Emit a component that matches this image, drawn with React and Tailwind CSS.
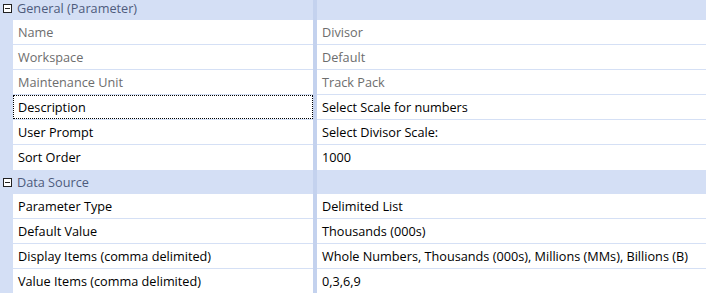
import React from "react"

const sections = [
    {
        title: "General (Parameter)",
        rows: [
            { label: "Name", value: "Divisor", readOnly: true },
            { label: "Workspace", value: "Default", readOnly: true },
            { label: "Maintenance Unit", value: "Track Pack", readOnly: true },
            { label: "Description", value: "Select Scale for numbers", focused: true },
            { label: "User Prompt", value: "Select Divisor Scale:" },
            { label: "Sort Order", value: "1000" },
        ],
    },
    {
        title: "Data Source",
        rows: [
            { label: "Parameter Type", value: "Delimited List" },
            { label: "Default Value", value: "Thousands (000s)" },
            { label: "Display Items (comma delimited)", value: "Whole Numbers, Thousands (000s), Millions (MMs), Billions (B)" },
            { label: "Value Items (comma delimited)", value: "0,3,6,9" },
        ],
    },
]

function Toggle() {
    return (
        <span className="w-[9px] h-[9px] border border-[#222] bg-white flex items-center justify-center shrink-0" >
            <span className="w-[5px] h-px bg-[#222]" />
        </span>
    )
}

function SectionHeader({ title }) {
    return (
        <div className="flex h-[24px] bg-[#d4dff5]" >
            <div className="w-[313px] flex items-center gap-[5px] pl-[3px]" >
                <Toggle />
                <span className="text-[#4e5b7c] pt-px" >{title}</span>
            </div>
            <div className="w-[4px] bg-[#c4d2ee]" />
            <div className="flex-1" />
        </div>
    )
}

function Row({ row, last }) {
    const color = row.readOnly ? "text-[#6d6d6d]" : "text-black"
    return (
        <div className="flex h-[25px] bg-[#d4dff5]" >
            <div className="w-[13px]" />
            <div className="w-[300px] flex flex-col bg-white" >
                <div
                    className={`h-[24px] flex items-center pt-px ${color} ${row.focused ? "border border-dotted border-black pl-[4px]" : "pl-[5px]"}`}
                >
                    {row.label}
                </div>
                <div className={`h-px ${last ? "bg-white" : "bg-[#d5e0f5]"}`} />
            </div>
            <div className="w-[4px] bg-[#c4d2ee]" />
            <div className="flex-1 flex flex-col bg-white" >
                <div className={`h-[24px] flex items-center pl-[5px] pt-px ${color}`} >
                    {row.value}
                </div>
                <div className={`h-px ${last ? "bg-white" : "bg-[#d5e0f5]"}`} />
            </div>
        </div>
    )
}

export default function App() {
    return (
        <div className="w-[706px] h-[293px] overflow-hidden bg-white font-['Open_Sans',sans-serif] text-[12.7px] leading-none" >
            <div className="-mt-[4px]" >
                {
                    sections.map(s => (
                        <div key={s.title} >
                            <SectionHeader title={s.title} />
                            {
                                s.rows.map((r, i) => (
                                    <Row key={r.label} row={r} last={i === s.rows.length - 1} />
                                ))
                            }
                        </div>
                    ))
                }
            </div>
        </div>
    )
}
